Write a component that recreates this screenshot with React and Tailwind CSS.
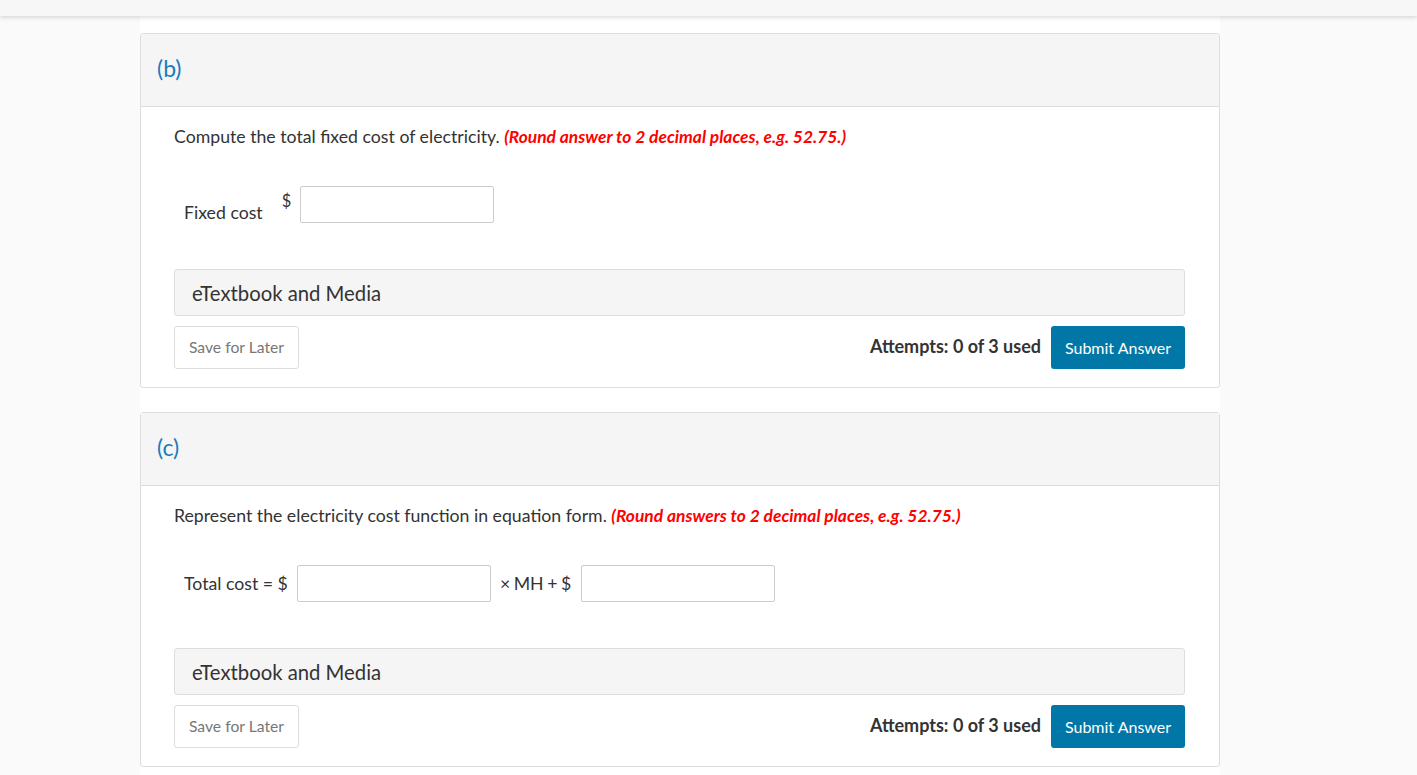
import React from "react";

const font = { fontFamily: "Lato, 'Open Sans', sans-serif" };

function Input({ w = "w-[194px]" }) {
  return (
    <input
      type="text"
      className={`${w} h-[37px] border border-[#cccccc] rounded-[2px] bg-white px-2 outline-none`}
    />
  );
}

function Footer({ top = "mt-[44px]" }) {
  return (
    <>
      <div className={`${top} h-[47px] flex items-center border border-[#dddddd] rounded-[3px] bg-[#f5f5f5] px-[17px] text-[20.3px] text-[#333333]`}>
        <span className="mt-[1px]">eTextbook and Media</span>
      </div>
      <div className="mt-[10px] flex items-center justify-between">
        <button className="h-[43px] w-[125px] border border-[#dddddd] rounded-[3px] bg-white text-[15.7px] text-[#777777]">
          Save for Later
        </button>
        <div className="flex items-center gap-[10px]">
          <span className="text-[18px] font-bold text-[#333333] -mt-[2px]">
            Attempts: 0 of 3 used
          </span>
          <button className="h-[43px] w-[134px] rounded-[3px] bg-[#0177a8] text-[16px] text-white">
            Submit Answer
          </button>
        </div>
      </div>
    </>
  );
}

function Card({ label, children }) {
  return (
    <div className="border border-[#dddddd] rounded-[3px] bg-white">
      <div className="h-[73px] flex items-center bg-[#f5f5f5] border-b border-[#dddddd] px-[16px] text-[23px] text-[#1a7cbf]">
        <span className="-mt-[3px]">{label}</span>
      </div>
      <div className="pl-[33px] pr-[34px] pt-[18px] pb-[18px]">{children}</div>
    </div>
  );
}

export default function App() {
  return (
    <div className="min-h-screen bg-[#fafafa] text-[#333333]" style={font}>
      <div className="h-[16px] bg-[#f7f7f7] shadow-[0_1px_5px_rgba(0,0,0,0.18)] relative z-10" />
      <div className="ml-[140px] w-[1080px] bg-white pt-[17px] pb-[10px] flex flex-col gap-[24px] min-h-[759px]">
        <Card label="(b)">
          <p className="text-[17.7px] leading-[24px]">
            Compute the total fixed cost of electricity.{" "}
            <span className="font-bold italic text-[#ff0000] text-[17.4px]">
              (Round answer to 2 decimal places, e.g. 52.75.)
            </span>
          </p>
          <div className="mt-[37px] flex items-start pl-[10px]">
            <span className="text-[17.7px] leading-[24px] mt-[15px]">Fixed cost</span>
            <span className="text-[16.5px] leading-[20px] mt-[5px] ml-[19px] mr-[9px]">$</span>
            <Input />
          </div>
          <Footer />
        </Card>
        <Card label="(c)">
          <p className="text-[17.7px] leading-[24px]">
            Represent the electricity cost function in equation form.{" "}
            <span className="font-bold italic text-[#ff0000] text-[17.4px]">
              (Round answers to 2 decimal places, e.g. 52.75.)
            </span>
          </p>
          <div className="mt-[37px] flex items-center pl-[10px]">
            <span className="text-[17.7px] leading-[24px]">Total cost = $</span>
            <span className="ml-[9px]"><Input /></span>
            <span className="text-[17.7px] leading-[24px] ml-[9px] mr-[10px] [word-spacing:-1px]">× MH + $</span>
            <Input />
          </div>
          <Footer top="mt-[46px]" />
        </Card>
      </div>
    </div>
  );
}
